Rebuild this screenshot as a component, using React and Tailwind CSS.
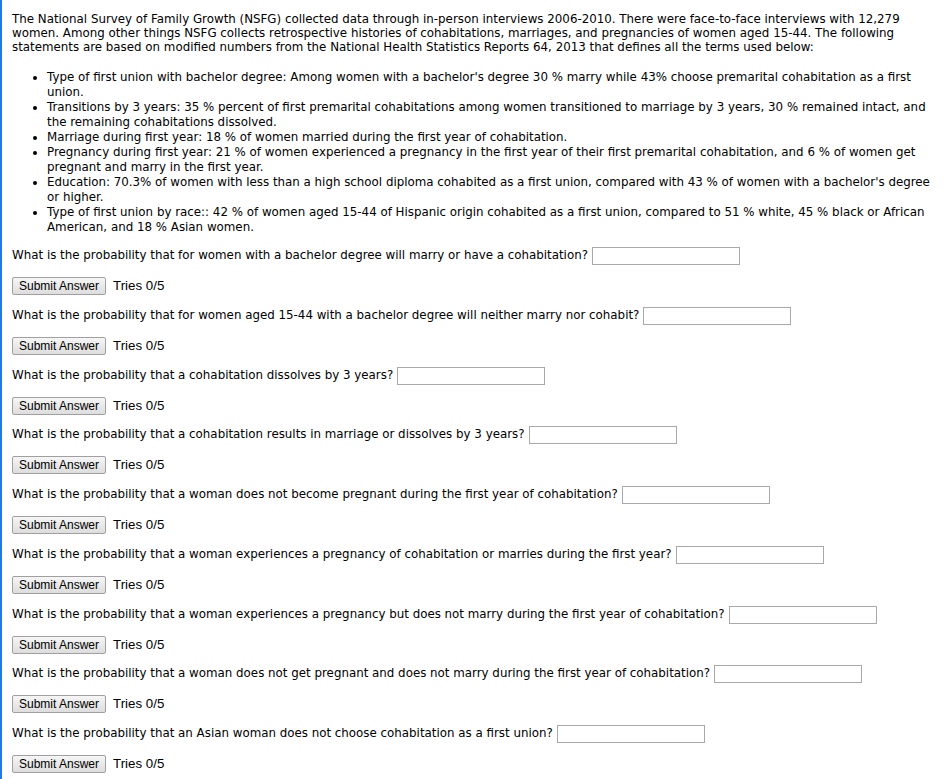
import React from 'react';

const questions = [
  'What is the probability that for women with a bachelor degree will marry or have a cohabitation?',
  'What is the probability that for women aged 15-44 with a bachelor degree will neither marry nor cohabit?',
  'What is the probability that a cohabitation dissolves by 3 years?',
  'What is the probability that a cohabitation results in marriage or dissolves by 3 years?',
  'What is the probability that a woman does not become pregnant during the first year of cohabitation?',
  'What is the probability that a woman experiences a pregnancy of cohabitation or marries during the first year?',
  'What is the probability that a woman experiences a pregnancy but does not marry during the first year of cohabitation?',
  'What is the probability that a woman does not get pregnant and does not marry during the first year of cohabitation?',
  'What is the probability that an Asian woman does not choose cohabitation as a first union?',
];

const facts = [
  "Type of first union with bachelor degree: Among women with a bachelor's degree 30 % marry while 43% choose premarital cohabitation as a first union.",
  'Transitions by 3 years: 35 % percent of first premarital cohabitations among women transitioned to marriage by 3 years, 30 % remained intact, and the remaining cohabitations dissolved.',
  'Marriage during first year: 18 % of women married during the first year of cohabitation.',
  'Pregnancy during first year: 21 % of women experienced a pregnancy in the first year of their first premarital cohabitation, and 6 % of women get pregnant and marry in the first year.',
  "Education: 70.3% of women with less than a high school diploma cohabited as a first union, compared with 43 % of women with a bachelor's degree or higher.",
  'Type of first union by race:: 42 % of women aged 15-44 of Hispanic origin cohabited as a first union, compared to 51 % white, 45 % black or African American, and 18 % Asian women.',
];

const Question = ({ text }) => (
  <div className="mb-[10.75px]">
    <div className="flex items-center h-[20px]">
      <span>{text}</span>
      <input type="text" className="ml-[4px] w-[148px] h-[18px] border border-[#a9a9a9] bg-white outline-none" />
    </div>
    <div className="flex items-center h-[18px] mt-[11px] font-['Liberation_Sans',Arial,sans-serif]">
      <button className="h-[18px] px-[6px] text-[12px] leading-none text-black border border-[#a0a0a0] rounded-[2px] bg-gradient-to-b from-[#f6f6f6] to-[#dddddd]">
        Submit Answer
      </button>
      <span className="ml-[7px] text-[13.3px]">Tries 0/5</span>
    </div>
  </div>
);

export default function App() {
  return (
    <div className="min-h-screen bg-white">
      <div className="border-l-[2px] border-[#1e7be6] pl-[10px] pr-[12px] pt-[12px] pb-[2px] text-black text-[11.85px] font-['DejaVu_Sans',Verdana,sans-serif]">
        <p className="leading-[14px]">
          The National Survey of Family Growth (NSFG) collected data through in-person interviews 2006-2010. There were face-to-face interviews with 12,279 women. Among other things NSFG collects retrospective histories of cohabitations, marriages, and pregnancies of women aged 15-44. The following statements are based on modified numbers from the National Health Statistics Reports 64, 2013 that defines all the terms used below:
        </p>
        <ul className="list-disc pl-[35px] mt-[16px] mb-[11px] leading-[15px]">
          {facts.map((f) => (
            <li key={f}>{f}</li>
          ))}
        </ul>
        {questions.map((q) => (
          <Question key={q} text={q} />
        ))}
      </div>
    </div>
  );
}
